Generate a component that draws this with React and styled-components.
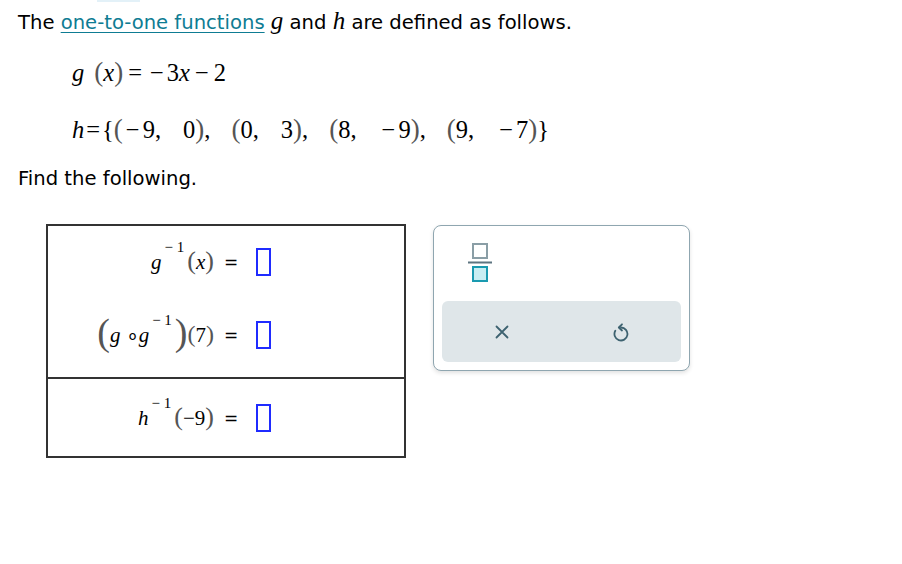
import React from "react";
import styled, { createGlobalStyle } from "styled-components";

const Global = createGlobalStyle`
  body {
    margin: 0;
    background: #fff;
    font-family: "DejaVu Sans", Verdana, sans-serif;
    color: #000;
  }
`;

const Page = styled.div`
  width: 902px;
  height: 564px;
  position: relative;
  overflow: hidden;
`;

const TopTab = styled.div`
  position: absolute;
  top: 0;
  left: 97px;
  width: 43px;
  height: 2px;
  background: #e3f1f8;
`;

const Body = styled.div`
  padding: 9px 0 0 18px;
`;

const Text = styled.p`
  margin: 0;
  margin-top: ${(p) => p.$top || 0}px;
  font-size: 19.6px;
  line-height: 24px;
`;

const Link = styled.a`
  color: #0e7c93;
  text-decoration: underline;
  text-underline-offset: 3px;
`;

const MathVar = styled.span`
  font-family: "Liberation Serif", "Times New Roman", serif;
  font-style: italic;
  font-size: 25px;
`;

const Formula = styled.div`
  margin-left: 54px;
  font-family: "Liberation Serif", "Times New Roman", serif;
  font-size: 24.5px;
  line-height: 30px;
  margin-top: ${(p) => p.$top}px;
  white-space: pre;
`;

const I = styled.i`
  margin-right: ${(p) => p.$after || 0}px;
`;

const Paren = styled.span`
  color: #555;
  font-size: ${(p) => p.$size || 27}px;
`;

const Op = styled.span`
  margin: 0 ${(p) => p.$gap ?? 2}px;
`;

const Comma = styled.span`
  margin-right: ${(p) => p.$gap}px;
`;

const Table = styled.div`
  margin: 33px 0 0 28px;
  width: 356px;
  border: 2px solid #333;
`;

const Group = styled.div`
  height: ${(p) => p.$h}px;
  box-sizing: border-box;
  padding-top: ${(p) => p.$pad}px;
  display: flex;
  flex-direction: column;
  gap: 33px;
  border-top: ${(p) => (p.$divider ? "2px solid #333" : "none")};
`;

const Row = styled.div`
  display: grid;
  grid-template-columns: 166px 42px auto;
  align-items: center;
  font-family: "Liberation Serif", "Times New Roman", serif;
  font-size: 21px;
  height: 40px;
`;

const Expr = styled.div`
  text-align: right;
  white-space: nowrap;
  line-height: 40px;
`;

const Eq = styled.div`
  padding-left: 10px;
  font-family: "DejaVu Sans", sans-serif;
  font-size: 17px;
`;

const AnswerBox = styled.span`
  display: block;
  width: 11px;
  height: 24px;
  border: 2px solid #1f2bff;
`;

const Sup = styled.sup`
  font-style: normal;
  font-size: 15px;
  vertical-align: 17px;
  line-height: 0;
  margin-left: 3px;
  margin-right: 3px;
  white-space: pre;
`;

const Big = styled.span`
  color: #555;
  font-size: 38px;
  vertical-align: -3px;
  line-height: 0;
`;

const Panel = styled.div`
  position: absolute;
  left: 433px;
  top: 225px;
  width: 257px;
  height: 146px;
  border: 1px solid #8fa6b0;
  border-radius: 8px;
  box-shadow: 0 2px 4px rgba(0, 0, 0, 0.12);
  background: #fff;
  padding: 8px;
  box-sizing: border-box;
  display: flex;
  flex-direction: column;
`;

const FracBtn = styled.div`
  width: 76px;
  height: 58px;
  display: flex;
  align-items: center;
  justify-content: center;
`;

const ActionBar = styled.div`
  margin-top: auto;
  height: 61px;
  background: #dfe6e9;
  border-radius: 6px;
  display: flex;
  align-items: center;
  justify-content: space-around;
`;

const IconBtn = styled.div`
  width: 40px;
  display: flex;
  justify-content: center;
`;

const FractionIcon = () => (
  <svg width="26" height="42" viewBox="0 0 26 42">
    <rect x="6" y="2" width="14" height="14" fill="#fff" stroke="#8a9ea6" strokeWidth="2" />
    <rect x="1" y="19.5" width="24" height="2" fill="#5d7480" />
    <rect x="6" y="25" width="14" height="14" fill="#c8eef3" stroke="#1a9ab0" strokeWidth="2" />
  </svg>
);

const XIcon = () => (
  <svg width="16" height="16" viewBox="0 0 16 16">
    <path d="M2.5 2.5 L13.5 13.5 M13.5 2.5 L2.5 13.5" stroke="#3d6270" strokeWidth="1.8" strokeLinecap="round" />
  </svg>
);

const UndoIcon = () => (
  <svg width="20" height="20" viewBox="0 0 20 20">
    <path
      d="M10 5.5 A6.5 6.5 0 1 1 4.3 8.8"
      fill="none"
      stroke="#3d6270"
      strokeWidth="1.8"
      strokeLinecap="round"
    />
    <path d="M11 2.3 L7.8 5.5 L11 8.5" fill="none" stroke="#3d6270" strokeWidth="1.8" strokeLinecap="round" strokeLinejoin="round" />
  </svg>
);

const Pair = ({ a, b }) => (
  <>
    <Paren>(</Paren>
    {a}
    <Comma $gap={22}>,</Comma>
    {b}
    <Paren>)</Paren>
  </>
);

const Neg = ({ n }) => (
  <>
    <Op $gap={3}>−</Op>
    {n}
  </>
);

export default function App() {
  return (
    <Page>
      <Global />
      <TopTab />
      <Body>
        <Text>
          The <Link href="#">one-to-one functions</Link> <MathVar>g</MathVar> and{" "}
          <MathVar>h</MathVar> are defined as follows.
        </Text>
        <Formula $top={22}>
          <I $after={10}>g</I>
          <Paren>(</Paren><I>x</I><Paren>)</Paren>
          <Op $gap={5}>=</Op>
          <Op $gap={3}>−</Op>3<I>x</I>
          <Op $gap={5}>−</Op>2
        </Formula>
        <Formula $top={26}>
          <I>h</I>
          <Op $gap={2}>=</Op>
          {"{"}
          <Pair a={<Neg n="9" />} b="0" />
          <Comma $gap={21}>,</Comma>
          <Pair a="0" b="3" />
          <Comma $gap={21}>,</Comma>
          <Pair a="8" b={<Neg n="9" />} />
          <Comma $gap={21}>,</Comma>
          <Pair a="9" b={<Neg n="7" />} />
          {"}"}
        </Formula>
        <Text $top={22}>Find the following.</Text>
        <Table>
          <Group $h={151} $pad={15}>
            <Row>
              <Expr>
                <I>g</I>
                <Sup>− 1</Sup>
                <Paren $size={26}>(</Paren><I>x</I><Paren $size={26}>)</Paren>
              </Expr>
              <Eq>=</Eq>
              <AnswerBox />
            </Row>
            <Row>
              <Expr>
                <Big>(</Big><I>g</I>  ∘<I>g</I>
                <Sup>− 1</Sup>
                <Big>)</Big><Paren $size={24}>(</Paren>7<Paren $size={24}>)</Paren>
              </Expr>
              <Eq>=</Eq>
              <AnswerBox />
            </Row>
          </Group>
          <Group $h={79} $pad={18} $divider>
            <Row>
              <Expr>
                <I>h</I>
                <Sup>− 1</Sup>
                <Paren $size={26}>(</Paren>−9<Paren $size={26}>)</Paren>
              </Expr>
              <Eq>=</Eq>
              <AnswerBox />
            </Row>
          </Group>
        </Table>
      </Body>
      <Panel>
        <FracBtn>
          <FractionIcon />
        </FracBtn>
        <ActionBar>
          <IconBtn>
            <XIcon />
          </IconBtn>
          <IconBtn>
            <UndoIcon />
          </IconBtn>
        </ActionBar>
      </Panel>
    </Page>
  );
}
